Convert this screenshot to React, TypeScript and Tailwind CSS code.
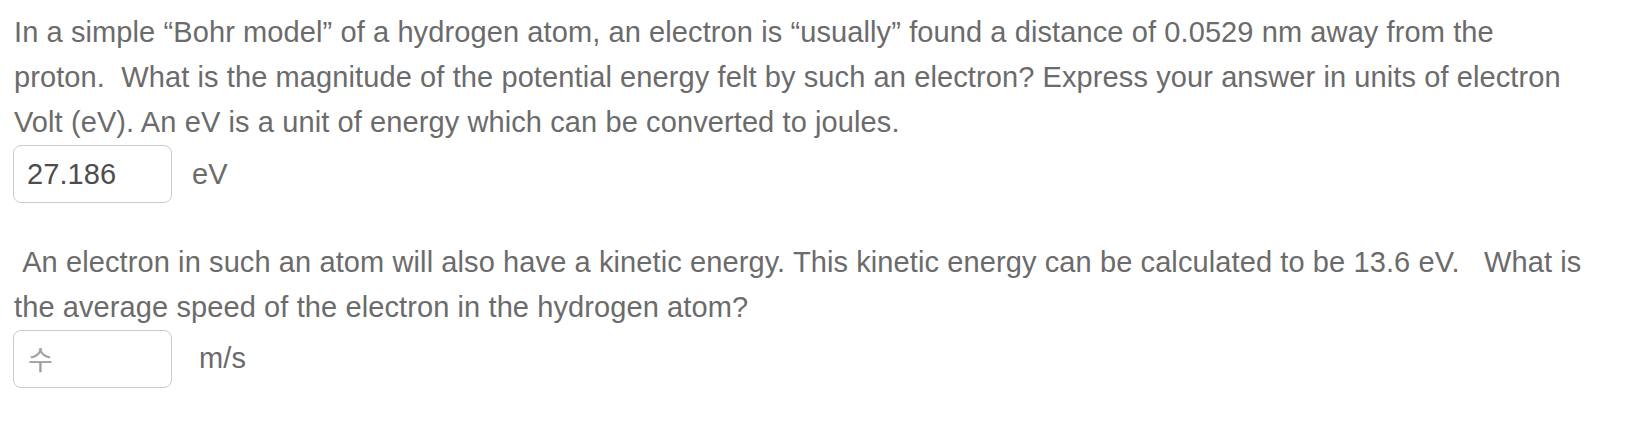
export default function App() {
  return (
    <div
      className="bg-white w-[1638px] h-[430px] pl-[14px] pt-[10px] text-[#6b6b6b] text-[29px] leading-[45px] tracking-[0.1px]"
      style={{ fontFamily: '"Liberation Sans", Arial, "Noto Sans CJK KR", sans-serif' }}
    >
      <div className="w-[1580px]">
        <p>
          In a simple “Bohr model” of a hydrogen atom, an electron is “usually” found a distance of 0.0529 nm away from the
          proton.&nbsp; What is the magnitude of the potential energy felt by such an electron? Express your answer in units of
          electron Volt (eV). An eV is a unit of energy which can be converted to joules.
        </p>
        <div className="flex items-center -ml-[1px]">
          <div className="w-[159px] h-[58px] border border-[#cccccc] rounded-[8px] flex items-center pl-[13px] text-[#4d4d4d]">
            27.186
          </div>
          <span className="ml-[20px]">eV</span>
        </div>
        <p className="mt-[36.5px]">
          &nbsp;An electron in such an atom will also have a kinetic energy. This kinetic energy can be calculated to be 13.6 eV.&nbsp;&nbsp; What is
          the average speed of the electron in the hydrogen atom?
        </p>
        <div className="flex items-center -ml-[1px]">
          <div
            className="w-[159px] h-[58px] border border-[#cccccc] rounded-[8px] flex items-center pl-[14px] text-[#a0a0a0] text-[27px]"
            style={{ fontFamily: '"Noto Sans CJK KR", sans-serif' }}
          >
            수
          </div>
          <span className="ml-[27px]">m/s</span>
        </div>
      </div>
    </div>
  );
}
